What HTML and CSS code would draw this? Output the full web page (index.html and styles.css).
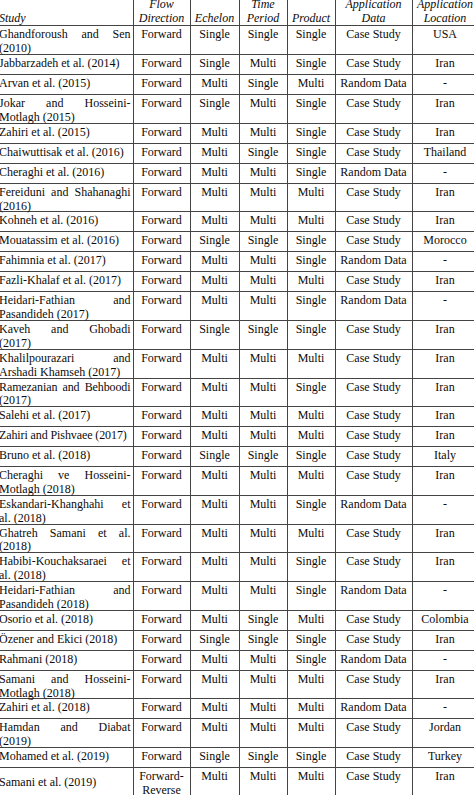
FILE: index.html
```html
<!DOCTYPE html>
<html>
<head>
<meta charset="utf-8">
<link rel="stylesheet" href="styles.css">
</head>
<body>
<table class="tbl">
<colgroup>
<col class="c-study"><col class="c-flow"><col class="c-ech"><col class="c-time"><col class="c-prod"><col class="c-data"><col class="c-loc">
</colgroup>
<thead>
<tr>
<th class="study">Study</th>
<th>Flow Direction</th>
<th>Echelon</th>
<th>Time Period</th>
<th>Product</th>
<th>Application Data</th>
<th>Application Location</th>
</tr>
</thead>
<tbody>
<tr><td class="study"><span class="ln">Ghandforoush and Sen</span><span class="ln2">(2010)</span></td><td>Forward</td><td>Single</td><td>Single</td><td>Single</td><td>Case Study</td><td>USA</td></tr>
<tr><td class="study one">Jabbarzadeh et al. (2014)</td><td>Forward</td><td>Single</td><td>Multi</td><td>Single</td><td>Case Study</td><td>Iran</td></tr>
<tr><td class="study one">Arvan et al. (2015)</td><td>Forward</td><td>Multi</td><td>Single</td><td>Multi</td><td>Random Data</td><td>-</td></tr>
<tr><td class="study"><span class="ln">Jokar and Hosseini-</span><span class="ln2">Motlagh (2015)</span></td><td>Forward</td><td>Single</td><td>Multi</td><td>Single</td><td>Case Study</td><td>Iran</td></tr>
<tr><td class="study one">Zahiri et al. (2015)</td><td>Forward</td><td>Multi</td><td>Multi</td><td>Single</td><td>Case Study</td><td>Iran</td></tr>
<tr><td class="study one">Chaiwuttisak et al. (2016)</td><td>Forward</td><td>Multi</td><td>Single</td><td>Single</td><td>Case Study</td><td>Thailand</td></tr>
<tr><td class="study one">Cheraghi et al. (2016)</td><td>Forward</td><td>Multi</td><td>Multi</td><td>Single</td><td>Random Data</td><td>-</td></tr>
<tr><td class="study"><span class="ln">Fereiduni and Shahanaghi</span><span class="ln2">(2016)</span></td><td>Forward</td><td>Multi</td><td>Multi</td><td>Multi</td><td>Case Study</td><td>Iran</td></tr>
<tr><td class="study one">Kohneh et al. (2016)</td><td>Forward</td><td>Multi</td><td>Multi</td><td>Multi</td><td>Case Study</td><td>Iran</td></tr>
<tr><td class="study one">Mouatassim et al. (2016)</td><td>Forward</td><td>Single</td><td>Single</td><td>Single</td><td>Case Study</td><td>Morocco</td></tr>
<tr><td class="study one">Fahimnia et al. (2017)</td><td>Forward</td><td>Multi</td><td>Multi</td><td>Single</td><td>Random Data</td><td>-</td></tr>
<tr><td class="study one">Fazli-Khalaf et al. (2017)</td><td>Forward</td><td>Multi</td><td>Multi</td><td>Multi</td><td>Case Study</td><td>Iran</td></tr>
<tr><td class="study"><span class="ln">Heidari-Fathian and</span><span class="ln2">Pasandideh (2017)</span></td><td>Forward</td><td>Multi</td><td>Multi</td><td>Single</td><td>Random Data</td><td>-</td></tr>
<tr><td class="study"><span class="ln">Kaveh and Ghobadi</span><span class="ln2">(2017)</span></td><td>Forward</td><td>Single</td><td>Single</td><td>Single</td><td>Case Study</td><td>Iran</td></tr>
<tr><td class="study"><span class="ln">Khalilpourazari and</span><span class="ln2">Arshadi Khamseh (2017)</span></td><td>Forward</td><td>Multi</td><td>Multi</td><td>Multi</td><td>Case Study</td><td>Iran</td></tr>
<tr><td class="study"><span class="ln tight">Ramezanian and Behboodi</span><span class="ln2">(2017)</span></td><td>Forward</td><td>Multi</td><td>Multi</td><td>Single</td><td>Case Study</td><td>Iran</td></tr>
<tr><td class="study one">Salehi et al. (2017)</td><td>Forward</td><td>Multi</td><td>Multi</td><td>Multi</td><td>Case Study</td><td>Iran</td></tr>
<tr><td class="study one tight">Zahiri and Pishvaee (2017)</td><td>Forward</td><td>Multi</td><td>Multi</td><td>Multi</td><td>Case Study</td><td>Iran</td></tr>
<tr><td class="study one">Bruno et al. (2018)</td><td>Forward</td><td>Single</td><td>Single</td><td>Single</td><td>Case Study</td><td>Italy</td></tr>
<tr><td class="study"><span class="ln">Cheraghi ve Hosseini-</span><span class="ln2">Motlagh (2018)</span></td><td>Forward</td><td>Multi</td><td>Multi</td><td>Multi</td><td>Case Study</td><td>Iran</td></tr>
<tr><td class="study"><span class="ln">Eskandari-Khanghahi et</span><span class="ln2">al. (2018)</span></td><td>Forward</td><td>Multi</td><td>Multi</td><td>Single</td><td>Random Data</td><td>-</td></tr>
<tr><td class="study"><span class="ln">Ghatreh Samani et al.</span><span class="ln2">(2018)</span></td><td>Forward</td><td>Multi</td><td>Multi</td><td>Multi</td><td>Case Study</td><td>Iran</td></tr>
<tr><td class="study"><span class="ln">Habibi-Kouchaksaraei et</span><span class="ln2">al. (2018)</span></td><td>Forward</td><td>Multi</td><td>Multi</td><td>Single</td><td>Case Study</td><td>Iran</td></tr>
<tr><td class="study"><span class="ln">Heidari-Fathian and</span><span class="ln2">Pasandideh (2018)</span></td><td>Forward</td><td>Multi</td><td>Multi</td><td>Single</td><td>Random Data</td><td>-</td></tr>
<tr><td class="study one">Osorio et al. (2018)</td><td>Forward</td><td>Multi</td><td>Single</td><td>Multi</td><td>Case Study</td><td>Colombia</td></tr>
<tr><td class="study one">Özener and Ekici (2018)</td><td>Forward</td><td>Single</td><td>Single</td><td>Single</td><td>Case Study</td><td>Iran</td></tr>
<tr><td class="study one">Rahmani (2018)</td><td>Forward</td><td>Multi</td><td>Multi</td><td>Single</td><td>Random Data</td><td>-</td></tr>
<tr><td class="study"><span class="ln">Samani and Hosseini-</span><span class="ln2">Motlagh (2018)</span></td><td>Forward</td><td>Multi</td><td>Multi</td><td>Multi</td><td>Case Study</td><td>Iran</td></tr>
<tr><td class="study one">Zahiri et al. (2018)</td><td>Forward</td><td>Multi</td><td>Multi</td><td>Multi</td><td>Random Data</td><td>-</td></tr>
<tr><td class="study"><span class="ln">Hamdan and Diabat</span><span class="ln2">(2019)</span></td><td>Forward</td><td>Multi</td><td>Multi</td><td>Multi</td><td>Case Study</td><td>Jordan</td></tr>
<tr><td class="study one">Mohamed et al. (2019)</td><td>Forward</td><td>Single</td><td>Single</td><td>Single</td><td>Case Study</td><td>Turkey</td></tr>
<tr><td class="study one mid">Samani et al. (2019)</td><td>Forward-Reverse</td><td>Multi</td><td>Multi</td><td>Multi</td><td>Case Study</td><td>Iran</td></tr>
</tbody>
</table>
</body>
</html>
```

FILE: styles.css
```css
html, body {
  margin: 0;
  padding: 0;
  overflow: hidden;
  background: #ffffff;
}

body {
  font-family: "Liberation Serif", "Times New Roman", serif;
  font-size: 12px;
  color: #0c0c0c;
}

.tbl {
  border-collapse: collapse;
  table-layout: fixed;
  width: 479px;
  margin-top: -3px;
  margin-left: -1px;
}

.c-study { width: 134px; }
.c-flow { width: 57px; }
.c-ech { width: 49px; }
.c-time { width: 48px; }
.c-prod { width: 48px; }
.c-data { width: 77px; }
.c-loc { width: 66px; }

.tbl th,
.tbl td {
  border: 1px solid #444444;
  text-align: center;
  vertical-align: top;
  line-height: 13.85px;
  padding: 2px 0 0 0;
}

.tbl th {
  border-top: none;
  font-style: italic;
  font-weight: normal;
  vertical-align: bottom;
  line-height: 14.2px;
  height: 28px;
  padding: 0;
}

.tbl th:first-child,
.tbl td:first-child {
  border-left: none;
}

.tbl tbody tr {
  height: 20px;
}

.tbl .study {
  text-align: left;
  padding-right: 2px;
}

.tbl .one {
  white-space: nowrap;
}

.tbl .ln {
  display: block;
  text-align: justify;
  text-align-last: justify;
}

.tbl .ln2 {
  display: block;
  margin-bottom: -2px;
}

.tbl .tight {
  letter-spacing: -0.1px;
}

.tbl .mid {
  vertical-align: middle;
  padding-top: 0;
}
```
